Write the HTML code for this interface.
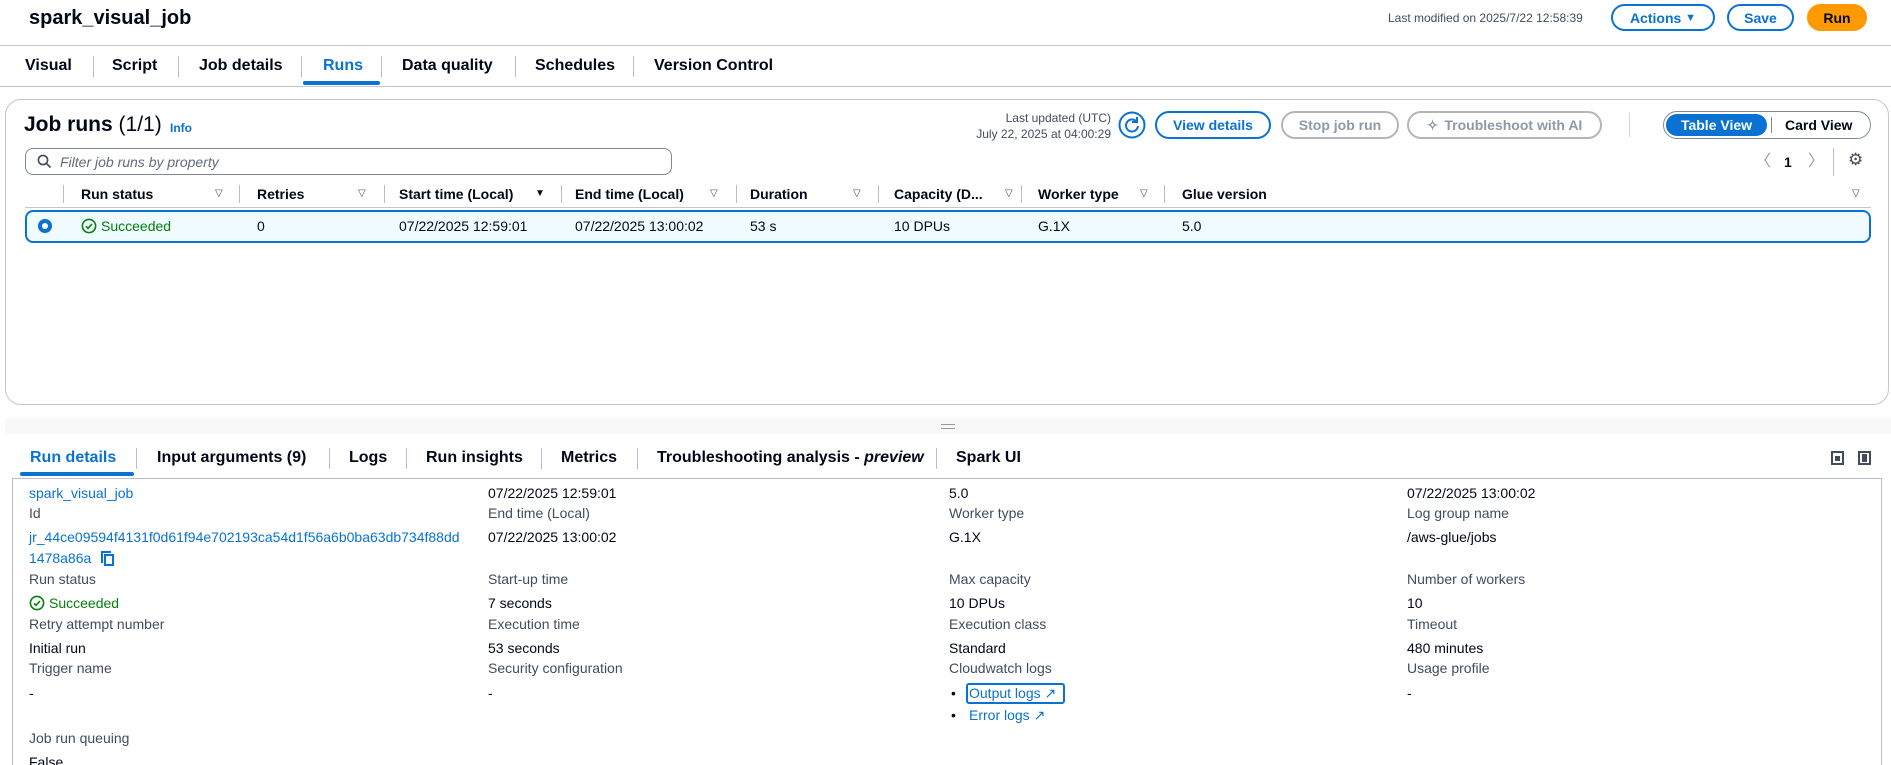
<!DOCTYPE html>
<html style="height:765px;overflow:hidden"><head><meta charset="utf-8"><style>
*{box-sizing:border-box;margin:0;padding:0}
html,body{width:1891px;height:765px;overflow:hidden}
body{background:#fff;font-family:"Liberation Sans",sans-serif;color:#000716;position:relative;font-size:14px}
.a{position:absolute;white-space:nowrap;line-height:18px}
.b{font-weight:bold}
.blue{color:#0972d3}
.g{color:#414d5c}
.sep{position:absolute;width:1px;background:#b6bec9}
.btn{position:absolute;border:2px solid #0972d3;border-radius:20px;color:#0972d3;font-weight:bold;font-size:14px;display:flex;align-items:center;justify-content:center;background:#fff}
.dis{border-color:#b4b4bb;color:#8d99a8}
.tri{position:absolute;font-size:10px;color:#414d5c;line-height:18px}
</style></head><body>
<div class="a b" style="left:29px;top:6px;font-size:20px;line-height:24px">spark_visual_job</div>
<div class="a" style="left:1388px;top:9px;font-size:12px;color:#414d5c">Last modified on 2025/7/22 12:58:39</div>
<div class="btn" style="left:1611px;top:4px;width:104px;height:27px">Actions&nbsp;<span style="font-size:11px">▼</span></div>
<div class="btn" style="left:1727px;top:4px;width:67px;height:27px">Save</div>
<div class="btn" style="left:1807px;top:4px;width:60px;height:27px;background:#ff9900;border-color:#ff9900;color:#000716">Run</div>
<div style="position:absolute;left:0;top:45px;width:1891px;height:1px;background:#c6c6cd"></div>
<div style="position:absolute;left:0;top:86px;width:1891px;height:1px;background:#c6c6cd"></div>
<div class="a b" style="left:25px;top:56px;font-size:16px;line-height:20px">Visual</div>
<div class="a b" style="left:112px;top:56px;font-size:16px;line-height:20px">Script</div>
<div class="a b" style="left:199px;top:56px;font-size:16px;line-height:20px">Job details</div>
<div class="a b blue" style="left:323px;top:56px;font-size:16px;line-height:20px">Runs</div>
<div class="a b" style="left:402px;top:56px;font-size:16px;line-height:20px">Data quality</div>
<div class="a b" style="left:535px;top:56px;font-size:16px;line-height:20px">Schedules</div>
<div class="a b" style="left:654px;top:56px;font-size:16px;line-height:20px">Version Control</div>
<div class="sep" style="left:93px;top:56px;height:21px"></div><div class="sep" style="left:178px;top:56px;height:21px"></div><div class="sep" style="left:301px;top:56px;height:21px"></div><div class="sep" style="left:381px;top:56px;height:21px"></div><div class="sep" style="left:515px;top:56px;height:21px"></div><div class="sep" style="left:633px;top:56px;height:21px"></div>
<div style="position:absolute;left:303px;top:81px;width:77px;height:4px;background:#0972d3;border-radius:2px"></div>

<div style="position:absolute;left:5px;top:99px;width:1884px;height:306px;border:1px solid #c6c6cd;border-radius:16px"></div>
<div class="a b" style="left:24px;top:113px;font-size:21px;line-height:24px">Job runs <span style="font-weight:normal">(1/1)</span></div>
<div class="a b blue" style="left:170px;top:119px;font-size:12px">Info</div>
<div class="a" style="left:971px;top:110px;width:140px;text-align:right;font-size:12px;line-height:16px;color:#414d5c">Last updated (UTC)<br>July 22, 2025 at 04:00:29</div>
<svg style="position:absolute;left:1118px;top:111px" width="28" height="28" viewBox="0 0 28 28"><circle cx="14" cy="14" r="12.5" fill="none" stroke="#0972d3" stroke-width="2"/><path d="M18.5 10.5A6 6 0 1 0 20 15" fill="none" stroke="#0972d3" stroke-width="2"/><path d="M19 6v5h-5" fill="none" stroke="#0972d3" stroke-width="2"/></svg>
<div class="btn" style="left:1155px;top:111px;width:116px;height:28px">View details</div>
<div class="btn dis" style="left:1281px;top:111px;width:118px;height:28px">Stop job run</div>
<div class="btn dis" style="left:1407px;top:111px;width:195px;height:28px"><span style="font-size:14px;margin-right:6px">✧</span>Troubleshoot with AI</div>
<div class="sep" style="left:1629px;top:113px;height:24px;background:#d1d5db"></div>
<div style="position:absolute;left:1663px;top:111px;width:208px;height:28px;border:1px solid #7d8998;border-radius:16px"></div>
<div style="position:absolute;left:1666px;top:114px;width:101px;height:22px;background:#0972d3;border-radius:12px;color:#fff;font-weight:bold;display:flex;align-items:center;justify-content:center">Table View</div>
<div class="sep" style="left:1771px;top:117px;height:16px;background:#7d8998"></div>
<div class="a b" style="left:1785px;top:116px">Card View</div>

<div style="position:absolute;left:25px;top:148px;width:647px;height:27px;border:1px solid #7d8998;border-radius:8px"></div>
<svg style="position:absolute;left:37px;top:154px" width="15" height="15" viewBox="0 0 15 15"><circle cx="6" cy="6" r="4.6" fill="none" stroke="#414d5c" stroke-width="1.6"/><path d="M9.5 9.5L13.5 13.5" stroke="#414d5c" stroke-width="1.6"/></svg>
<div class="a" style="left:60px;top:153px;font-style:italic;color:#5f6b7a;font-size:14px">Filter job runs by property</div>
<div class="a" style="left:1755px;top:153px;color:#8d99a8;font-size:16px">〈</div>
<div class="a b" style="left:1784px;top:153px">1</div>
<div class="a" style="left:1808px;top:153px;color:#8d99a8;font-size:16px">〉</div>
<div class="sep" style="left:1833px;top:148px;height:28px"></div>
<div class="a" style="left:1848px;top:151px;font-size:17px;color:#414d5c">⚙</div>

<div class="sep" style="left:63px;top:185px;height:18px"></div>
<div class="a b" style="left:81px;top:185px">Run status</div><div class="tri" style="left:215px;top:185px">▽</div>
<div class="sep" style="left:239px;top:185px;height:18px"></div>
<div class="a b" style="left:257px;top:185px">Retries</div><div class="tri" style="left:358px;top:185px">▽</div>
<div class="sep" style="left:384px;top:185px;height:18px"></div>
<div class="a b" style="left:399px;top:185px">Start time (Local)</div><div class="tri" style="left:535px;top:185px;color:#000716">▼</div>
<div class="sep" style="left:561px;top:185px;height:18px"></div>
<div class="a b" style="left:575px;top:185px">End time (Local)</div><div class="tri" style="left:710px;top:185px">▽</div>
<div class="sep" style="left:736px;top:185px;height:18px"></div>
<div class="a b" style="left:750px;top:185px">Duration</div><div class="tri" style="left:853px;top:185px">▽</div>
<div class="sep" style="left:878px;top:185px;height:18px"></div>
<div class="a b" style="left:894px;top:185px">Capacity (D...</div><div class="tri" style="left:1005px;top:185px">▽</div>
<div class="sep" style="left:1021px;top:185px;height:18px"></div>
<div class="a b" style="left:1038px;top:185px">Worker type</div><div class="tri" style="left:1140px;top:185px">▽</div>
<div class="sep" style="left:1164px;top:185px;height:18px"></div>
<div class="a b" style="left:1182px;top:185px">Glue version</div><div class="tri" style="left:1852px;top:185px">▽</div>
<div style="position:absolute;left:25px;top:207px;width:1846px;height:1px;background:#c6c6cd"></div>

<div style="position:absolute;left:25px;top:210px;width:1846px;height:33px;border:2px solid #0972d3;border-radius:8px;background:#f0fbff"></div>
<svg style="position:absolute;left:37px;top:218px" width="16" height="16"><circle cx="8" cy="8" r="7" fill="#0972d3"/><circle cx="8" cy="8" r="3" fill="#fff"/></svg>
<svg style="position:absolute;left:81px;top:218px" width="16" height="16"><circle cx="8" cy="8" r="6.6" fill="none" stroke="#037f0c" stroke-width="1.6"/><path d="M5 8.3l2 2 4-4.3" fill="none" stroke="#037f0c" stroke-width="1.6"/></svg>
<div class="a" style="left:101px;top:217px;color:#037f0c">Succeeded</div>
<div class="a" style="left:257px;top:217px">0</div>
<div class="a" style="left:399px;top:217px">07/22/2025 12:59:01</div>
<div class="a" style="left:575px;top:217px">07/22/2025 13:00:02</div>
<div class="a" style="left:750px;top:217px">53 s</div>
<div class="a" style="left:894px;top:217px">10 DPUs</div>
<div class="a" style="left:1038px;top:217px">G.1X</div>
<div class="a" style="left:1182px;top:217px">5.0</div>

<div style="position:absolute;left:5px;top:418px;width:1886px;height:16px;background:#f8f8f8"></div>
<div style="position:absolute;left:941px;top:424px;width:14px;height:1px;background:#8d99a8"></div>
<div style="position:absolute;left:941px;top:428px;width:14px;height:1px;background:#8d99a8"></div>

<div class="a b blue" style="left:30px;top:448px;font-size:16px;line-height:20px">Run details</div>
<div class="a b" style="left:157px;top:448px;font-size:16px;line-height:20px">Input arguments (9)</div>
<div class="a b" style="left:349px;top:448px;font-size:16px;line-height:20px">Logs</div>
<div class="a b" style="left:426px;top:448px;font-size:16px;line-height:20px">Run insights</div>
<div class="a b" style="left:561px;top:448px;font-size:16px;line-height:20px">Metrics</div>
<div class="a b" style="left:657px;top:448px;font-size:16px;line-height:20px">Troubleshooting analysis - <i>preview</i></div>
<div class="a b" style="left:956px;top:448px;font-size:16px;line-height:20px">Spark UI</div>
<div class="sep" style="left:136px;top:448px;height:21px"></div><div class="sep" style="left:329px;top:448px;height:21px"></div><div class="sep" style="left:406px;top:448px;height:21px"></div><div class="sep" style="left:541px;top:448px;height:21px"></div><div class="sep" style="left:637px;top:448px;height:21px"></div><div class="sep" style="left:936px;top:448px;height:21px"></div>
<div style="position:absolute;left:20px;top:472px;width:114px;height:4px;background:#0972d3;border-radius:2px"></div>
<div style="position:absolute;left:1831px;top:451px;width:13px;height:14px;border:2px solid #414d5c"></div><div style="position:absolute;left:1835px;top:456px;width:5px;height:5px;background:#414d5c"></div>
<div style="position:absolute;left:1858px;top:451px;width:13px;height:14px;border:2px solid #414d5c"></div><div style="position:absolute;left:1862px;top:454px;width:5px;height:8px;background:#414d5c"></div>

<div style="position:absolute;left:12px;top:478px;width:1870px;height:287px;border:1px solid #b6bec9;border-bottom:none"></div>

<div class="a blue" style="left:29px;top:484px">spark_visual_job</div>
<div class="a g" style="left:29px;top:504px">Id</div>
<div class="a blue" style="left:29px;top:528px">jr_44ce09594f4131f0d61f94e702193ca54d1f56a6b0ba63db734f88dd</div>
<div class="a blue" style="left:29px;top:549px">1478a86a</div>
<div style="position:absolute;left:101px;top:551px;width:10px;height:12px;border:2px solid #0972d3;border-right:none;border-bottom:none"></div><div style="position:absolute;left:104px;top:554px;width:10px;height:12px;border:2px solid #0972d3"></div>
<div class="a g" style="left:29px;top:570px">Run status</div>
<svg style="position:absolute;left:29px;top:595px" width="16" height="16"><circle cx="8" cy="8" r="6.6" fill="none" stroke="#037f0c" stroke-width="1.6"/><path d="M5 8.3l2 2 4-4.3" fill="none" stroke="#037f0c" stroke-width="1.6"/></svg>
<div class="a" style="left:49px;top:594px;color:#037f0c">Succeeded</div>
<div class="a g" style="left:29px;top:615px">Retry attempt number</div>
<div class="a" style="left:29px;top:639px">Initial run</div>
<div class="a g" style="left:29px;top:659px">Trigger name</div>
<div class="a" style="left:29px;top:684px">-</div>
<div class="a g" style="left:29px;top:729px">Job run queuing</div>
<div class="a" style="left:29px;top:753px">False</div>

<div class="a" style="left:488px;top:484px">07/22/2025 12:59:01</div>
<div class="a g" style="left:488px;top:504px">End time (Local)</div>
<div class="a" style="left:488px;top:528px">07/22/2025 13:00:02</div>
<div class="a g" style="left:488px;top:570px">Start-up time</div>
<div class="a" style="left:488px;top:594px">7 seconds</div>
<div class="a g" style="left:488px;top:615px">Execution time</div>
<div class="a" style="left:488px;top:639px">53 seconds</div>
<div class="a g" style="left:488px;top:659px">Security configuration</div>
<div class="a" style="left:488px;top:684px">-</div>

<div class="a" style="left:949px;top:484px">5.0</div>
<div class="a g" style="left:949px;top:504px">Worker type</div>
<div class="a" style="left:949px;top:528px">G.1X</div>
<div class="a g" style="left:949px;top:570px">Max capacity</div>
<div class="a" style="left:949px;top:594px">10 DPUs</div>
<div class="a g" style="left:949px;top:615px">Execution class</div>
<div class="a" style="left:949px;top:639px">Standard</div>
<div class="a g" style="left:949px;top:659px">Cloudwatch logs</div>
<div class="a" style="left:951px;top:684px">•</div>
<div style="position:absolute;left:966px;top:683px;width:99px;height:21px;border:2px solid #0972d3;border-radius:3px"></div>
<div class="a blue" style="left:969px;top:684px">Output logs ↗</div>
<div class="a" style="left:951px;top:706px">•</div>
<div class="a blue" style="left:969px;top:706px">Error logs ↗</div>

<div class="a" style="left:1407px;top:484px">07/22/2025 13:00:02</div>
<div class="a g" style="left:1407px;top:504px">Log group name</div>
<div class="a" style="left:1407px;top:528px">/aws-glue/jobs</div>
<div class="a g" style="left:1407px;top:570px">Number of workers</div>
<div class="a" style="left:1407px;top:594px">10</div>
<div class="a g" style="left:1407px;top:615px">Timeout</div>
<div class="a" style="left:1407px;top:639px">480 minutes</div>
<div class="a g" style="left:1407px;top:659px">Usage profile</div>
<div class="a" style="left:1407px;top:684px">-</div>
</body></html>
